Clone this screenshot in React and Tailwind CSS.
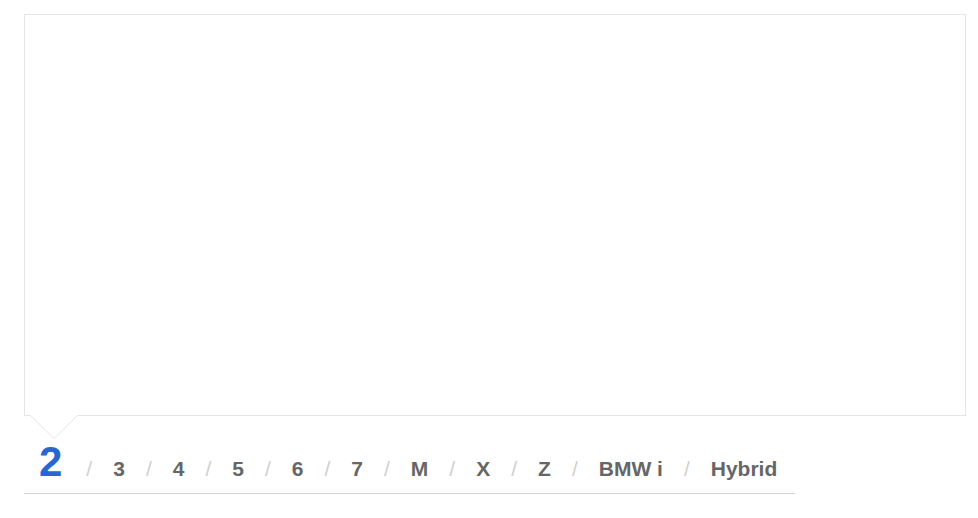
import React from 'react'

const series = ['3', '4', '5', '6', '7', 'M', 'X', 'Z', 'BMW i', 'Hybrid']

const Slash = ({ first }) => (
  <span className={first ? 'ml-[3px] text-[21px] font-normal leading-none text-[#d0d0d0]' : 'text-[21px] font-normal leading-none text-[#d0d0d0]'}>/</span>
)

const App = () => {
  return (
    <div className="min-h-[518px] bg-white pt-[14px] pl-[24px] font-['Liberation_Sans',Arial,sans-serif]">
      <div className="relative h-[402px] w-[942px] border border-[#e5e5e5] bg-white">
        <svg
          className="absolute left-[5px] top-[400px]"
          width="48"
          height="26"
          viewBox="0 0 48 26"
        >
          <polygon points="0,0 48,0 24,24" fill="#ffffff" />
          <polyline points="1,1 24,23.5 47,1" fill="none" stroke="#e5e5e5" strokeWidth="1" />
        </svg>
      </div>
      <div className="mt-[25px] flex w-[771px] items-baseline gap-[21px] border-b border-[#d5d5d5] pb-[10px] pl-[15px]">
        <span className="text-[42px] font-bold leading-none text-[#2866d0]">2</span>
        {series.map((s, i) => (
          <React.Fragment key={s}>
            <Slash first={i === 0} />
            <span className="text-[21px] font-bold leading-none text-[#666666]">{s}</span>
          </React.Fragment>
        ))}
      </div>
    </div>
  )
}

export default App
